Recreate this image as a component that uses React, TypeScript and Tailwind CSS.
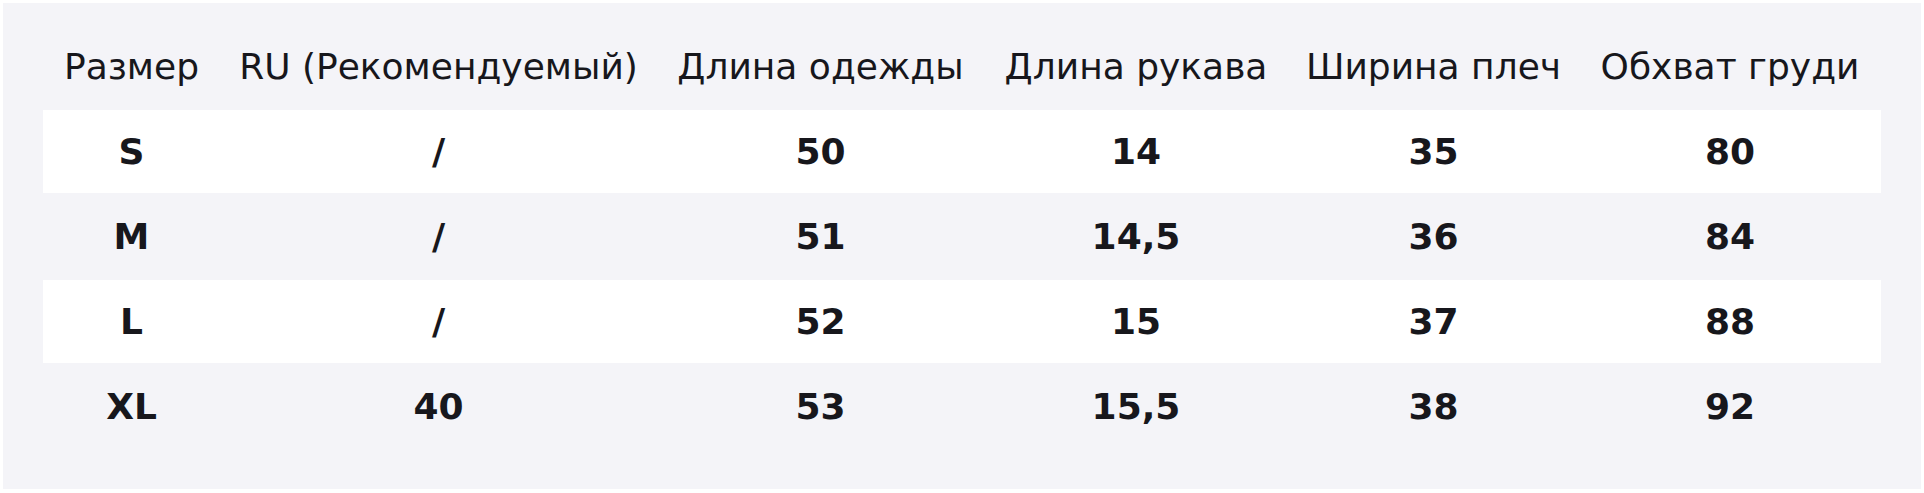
import React from "react";

const headers = [
  "Размер",
  "RU (Рекомендуемый)",
  "Длина одежды",
  "Длина рукава",
  "Ширина плеч",
  "Обхват груди",
];

const rows = [
  ["S", "/", "50", "14", "35", "80"],
  ["M", "/", "51", "14,5", "36", "84"],
  ["L", "/", "52", "15", "37", "88"],
  ["XL", "40", "53", "15,5", "38", "92"],
];

const grid =
  "grid grid-cols-[177px_437px_327px_304px_291px_302px] w-[1838px] h-[83px] items-center text-center";

export default function App() {
  return (
    <div className="w-[1924px] h-[493px] bg-white p-[3px] [font-family:'DejaVu_Sans',sans-serif]">
      <div className="h-[486px] bg-[#f4f4f8] pl-[40px] pt-[22px] flex flex-col gap-[2px]">
        <div className={grid + " text-[36px] text-[#17171c]"}>
          {headers.map((h) => (
            <div key={h} className="whitespace-nowrap">
              {h}
            </div>
          ))}
        </div>
        {rows.map((r, i) => (
          <div
            key={i}
            className={
              grid +
              " text-[36px] font-bold text-[#17171c] " +
              (i % 2 === 0 ? "bg-white" : "bg-[#f4f4f8]")
            }
          >
            {r.map((c, j) => (
              <div key={j}>{c}</div>
            ))}
          </div>
        ))}
      </div>
    </div>
  );
}
